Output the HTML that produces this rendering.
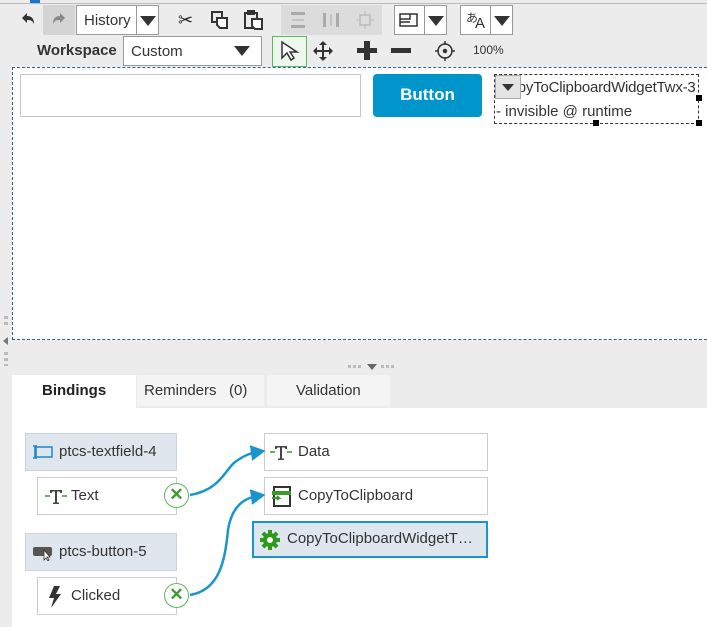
<!DOCTYPE html>
<html><head><meta charset="utf-8"><style>
*{box-sizing:border-box;margin:0;padding:0}
body{width:707px;height:627px;background:#ececec;font-family:"Liberation Sans",Arial,sans-serif;position:relative;overflow:hidden;color:#333}
.a{position:absolute}
.dd{position:absolute;background:#fff;border:1px solid #999;font-size:15px;color:#333}
.tri{width:0;height:0;border-left:8px solid transparent;border-right:8px solid transparent;border-top:10px solid #333;position:absolute}
.box{position:absolute;background:#fff;border:1px solid #c9cdd1;font-size:15px;color:#333}
.hdr{position:absolute;background:#dfe6ee;border:1px solid #c9d2dc;font-size:15px;color:#333}
.x{position:absolute;width:25px;height:25px;border-radius:50%;border:1.5px solid #5cb85c;background:#fff;color:#3a9a2a;font-weight:bold;font-size:17px;line-height:21px;text-align:center}
</style></head><body>
<div class="a" style="left:0;top:3px;width:707px;height:1px;background:#bbb"></div>
<div class="a" style="left:30px;top:0;width:10px;height:3px;background:#1a73c8"></div>
<svg class="a" style="left:20px;top:12px" width="16" height="14"><path d="M2 6 L7 1 L7 4 C12 4 14 7 14 12 C12 8 10 8 7 8 L7 11 Z" fill="#333"/></svg>
<div class="a" style="left:43px;top:5px;width:32px;height:30px;background:#d4d4d4"></div>
<svg class="a" style="left:51px;top:12px" width="16" height="14"><path d="M14 6 L9 1 L9 4 C4 4 2 7 2 12 C4 8 6 8 9 8 L9 11 Z" fill="#888"/></svg>
<div class="dd" style="left:76px;top:5px;width:83px;height:30px"><span class="a" style="left:7px;top:6px">History</span><div class="a" style="left:59px;top:0;width:1px;height:28px;background:#999"></div><div class="tri" style="left:63px;top:10px"></div></div>
<div class="a" style="left:178px;top:10px;font-size:18px;color:#222">✂</div>
<svg class="a" style="left:210px;top:10px" width="20" height="20" fill="none" stroke="#333" stroke-width="2"><rect x="2" y="2" width="10" height="10"/><path d="M7 8h10v10h-7l-3-3z" fill="#fff"/></svg>
<svg class="a" style="left:243px;top:9px" width="22" height="22" fill="none" stroke="#333" stroke-width="2"><rect x="2" y="4" width="12" height="15"/><rect x="5" y="2" width="6" height="3" fill="#333"/><path d="M9 10h10v10h-7l-3-3z" fill="#fff"/></svg>
<div class="a" style="left:281px;top:5px;width:101px;height:30px;background:#dcdcdc"></div>
<svg class="a" style="left:289px;top:11px" width="18" height="18"><rect x="2" y="1" width="14" height="3" fill="#aaa"/><rect x="2" y="14" width="14" height="3" fill="#aaa"/><path d="M3 9h12" stroke="#bbb" stroke-width="1.5"/></svg>
<svg class="a" style="left:322px;top:11px" width="18" height="18"><rect x="1" y="2" width="3" height="14" fill="#aaa"/><rect x="14" y="2" width="3" height="14" fill="#aaa"/><path d="M9 3v12" stroke="#bbb" stroke-width="1.5"/></svg>
<svg class="a" style="left:355px;top:10px" width="20" height="20"><rect x="5" y="5" width="10" height="10" fill="none" stroke="#bbb" stroke-width="1.5"/><path d="M10 1v4M10 15v4M1 10h4M15 10h4" stroke="#bbb"/></svg>
<div class="dd" style="left:394px;top:5px;width:53px;height:30px"><svg class="a" style="left:4px;top:6px" width="20" height="16" fill="none" stroke="#333" stroke-width="1.5"><rect x="1" y="2" width="17" height="12"/><path d="M1 7h10V2M1 10h10"/></svg><div class="a" style="left:29px;top:0;width:1px;height:28px;background:#999"></div><div class="tri" style="left:33px;top:10px"></div></div>
<div class="dd" style="left:460px;top:5px;width:53px;height:30px"><span class="a" style="left:5px;top:3px;font-size:12px;font-family:'Noto Sans CJK JP',sans-serif">あ</span><span class="a" style="left:14px;top:9px;font-size:15px">A</span><div class="a" style="left:29px;top:0;width:1px;height:28px;background:#999"></div><div class="tri" style="left:33px;top:10px"></div></div>
<div class="a" style="left:37px;top:42px;font-size:15px;font-weight:bold;color:#333">Workspace</div>
<div class="dd" style="left:123px;top:36px;width:139px;height:30px"><span class="a" style="left:7px;top:6px">Custom</span><div class="tri" style="left:110px;top:9px"></div></div>
<div class="a" style="left:272px;top:36px;width:35px;height:31px;border:1.5px solid #5cb85c;background:#eef7ec"></div>
<svg class="a" style="left:279px;top:40px" width="22" height="22"><path d="M3 2 L3 18 L8 13 L12 20 L15 18 L11 12 L18 12 Z" fill="#fff" stroke="#333" stroke-width="1.5"/></svg>
<svg class="a" style="left:312px;top:40px" width="22" height="22" fill="#333"><path d="M11 1l4 4h-3v5h5V7l4 4-4 4v-3h-5v5h3l-4 4-4-4h3v-5H5v3l-4-4 4-4v3h5V5H7z"/></svg>
<div class="a" style="left:357px;top:48px;width:20px;height:5px;background:#333"></div><div class="a" style="left:364px;top:41px;width:6px;height:19px;background:#333"></div>
<div class="a" style="left:391px;top:48px;width:20px;height:5px;background:#333"></div>
<svg class="a" style="left:434px;top:40px" width="22" height="22" fill="none" stroke="#333" stroke-width="1.5"><circle cx="11" cy="11" r="7"/><circle cx="11" cy="11" r="1.5" fill="#333"/><path d="M11 1v4M11 17v4M1 11h4M17 11h4"/></svg>
<div class="a" style="left:473px;top:43px;font-size:12px;color:#333">100%</div>
<div class="a" style="left:12px;top:67px;width:700px;height:273px;background:#fff;border:1px dashed #2a6496"></div>
<div class="a" style="left:20px;top:74px;width:341px;height:43px;border:1px solid #c4c8cc;background:#fff"></div>
<div class="a" style="left:373px;top:74px;width:109px;height:43px;background:#0096cc;border-radius:4px;color:#fff;font-weight:bold;font-size:17px;text-align:center;line-height:42px">Button</div>
<div class="a" style="left:494px;top:74px;width:205px;height:50px;border:1px dashed #333;overflow:hidden;font-size:15px;color:#333">
<span class="a" style="left:4px;top:4px;white-space:nowrap;letter-spacing:-0.2px">CopyToClipboardWidgetTwx-3</span>
<span class="a" style="left:1px;top:28px;white-space:nowrap">- invisible @ runtime</span>
<div class="a" style="left:0;top:0;width:26px;height:24px;background:#e4e4e4;border:1px solid #aaa"><div class="tri" style="left:6px;top:8px;border-width:7px 6px 0 6px"></div></div>
</div>
<div class="a" style="left:696px;top:95px;width:6px;height:6px;background:#000"></div>
<div class="a" style="left:696px;top:120px;width:6px;height:6px;background:#000"></div>
<div class="a" style="left:593px;top:120px;width:6px;height:6px;background:#000"></div>
<div class="a" style="left:4px;top:316px;width:4px;height:12px;background:repeating-linear-gradient(#bbb 0 3px,transparent 3px 6px)"></div>
<div class="a" style="left:3px;top:337px;width:0;height:0;border-top:4px solid transparent;border-bottom:4px solid transparent;border-right:5px solid #777"></div>
<div class="a" style="left:4px;top:352px;width:4px;height:14px;background:repeating-linear-gradient(#bbb 0 3px,transparent 3px 6px)"></div>
<div class="a" style="left:348px;top:365px;width:14px;height:3px;background:repeating-linear-gradient(90deg,#bbb 0 3px,transparent 3px 5px)"></div>
<div class="a" style="left:367px;top:364px;border-left:5px solid transparent;border-right:5px solid transparent;border-top:6px solid #666"></div>
<div class="a" style="left:381px;top:365px;width:14px;height:3px;background:repeating-linear-gradient(90deg,#bbb 0 3px,transparent 3px 5px)"></div>
<div class="a" style="left:12px;top:375px;width:695px;height:252px;background:#fff"></div>
<div class="a" style="left:136px;top:375px;width:571px;height:33px;background:#ececec"></div>
<div class="a" style="left:137px;top:375px;width:127px;height:31px;background:#f4f4f4"></div>
<div class="a" style="left:267px;top:375px;width:123px;height:31px;background:#f4f4f4"></div>
<div class="a" style="left:42px;top:382px;font-size:15px;font-weight:bold;color:#222">Bindings</div>
<div class="a" style="left:144px;top:382px;font-size:15px">Reminders&nbsp;&nbsp;&nbsp;(0)</div>
<div class="a" style="left:296px;top:382px;font-size:15px">Validation</div>

<div class="hdr" style="left:25px;top:433px;width:152px;height:38px"><svg class="a" style="left:6px;top:11px" width="22" height="14" fill="none" stroke="#1a88c9" stroke-width="1.5"><rect x="4" y="2" width="16" height="10"/><path d="M1 1h4M1 13h4M3 1v12"/></svg><span class="a" style="left:33px;top:9px">ptcs-textfield-4</span></div>
<div class="box" style="left:37px;top:477px;width:140px;height:38px"><svg class="a" style="left:7px;top:10px" width="22" height="16"><path d="M0 8h5M17 8h5" stroke="#3a9a2a" stroke-width="1.5"/><path d="M5 2h12v3h-1.5l-1-1.5h-2.5v11h2v1.5h-6v-1.5h2v-11h-2.5l-1 1.5H5z" fill="#444"/></svg><span class="a" style="left:33px;top:9px">Text</span></div>
<div class="x" style="left:164px;top:483px">✕</div>
<div class="hdr" style="left:25px;top:533px;width:152px;height:38px"><svg class="a" style="left:6px;top:11px" width="22" height="16"><rect x="1" y="2" width="19" height="9" rx="2" fill="#555"/><path d="M12 5 L12 15 L14 13 L16 16 L17 15 L15 12 L18 12 Z" fill="#fff" stroke="#333" stroke-width=".8"/></svg><span class="a" style="left:33px;top:9px">ptcs-button-5</span></div>
<div class="box" style="left:37px;top:577px;width:140px;height:38px"><svg class="a" style="left:10px;top:8px" width="14" height="22"><path d="M6 0 L12 0 L8 8 L13 8 L3 22 L6 12 L1 12 Z" fill="#333"/></svg><span class="a" style="left:33px;top:9px">Clicked</span></div>
<div class="x" style="left:164px;top:583px">✕</div>

<div class="box" style="left:264px;top:433px;width:224px;height:38px"><svg class="a" style="left:5px;top:10px" width="22" height="16"><path d="M0 8h5M17 8h5" stroke="#3a9a2a" stroke-width="1.5"/><path d="M5 2h12v3h-1.5l-1-1.5h-2.5v11h2v1.5h-6v-1.5h2v-11h-2.5l-1 1.5H5z" fill="#444"/></svg><span class="a" style="left:33px;top:9px">Data</span></div>
<div class="box" style="left:264px;top:477px;width:224px;height:38px"><svg class="a" style="left:6px;top:8px" width="22" height="22"><rect x="3" y="1" width="16" height="19" fill="#fff" stroke="#333" stroke-width="2"/><rect x="1" y="5" width="19" height="4" fill="#3a9a2a"/><path d="M1 12h7l-2-2M8 12l-2 2" stroke="#3a9a2a" stroke-width="2" fill="none"/></svg><span class="a" style="left:33px;top:9px">CopyToClipboard</span></div>
<div class="a" style="left:252px;top:521px;width:236px;height:37px;border:2px solid #1a95cc;background:#dfe6ee;font-size:15px"><svg class="a" style="left:6px;top:7px" width="20" height="20"><g fill="#2c9a1a"><circle cx="10" cy="10" r="7"/><path d="M8 0h4v20H8zM0 8h20v4H0z"/><path d="M8 0h4v20H8z" transform="rotate(45 10 10)"/><path d="M8 0h4v20H8z" transform="rotate(-45 10 10)"/></g><circle cx="10" cy="10" r="3" fill="#fff"/></svg><span class="a" style="left:33px;top:7px;white-space:nowrap">CopyToClipboardWidgetT…</span></div>

<svg class="a" style="left:0;top:0" width="707" height="627" fill="none" stroke="#1a95cc" stroke-width="2.5">
<path d="M190 495 C220 490 225 470 235 462 C245 455 252 452 260 452"/>
<path d="M250 446 L264 451 L252 460" fill="#1a95cc" stroke-width="1.5"/>
<path d="M190 595 C220 590 225 560 228 530 C232 505 245 497 260 496"/>
<path d="M250 490 L264 495 L252 504" fill="#1a95cc" stroke-width="1.5"/>
</svg>
</body></html>
